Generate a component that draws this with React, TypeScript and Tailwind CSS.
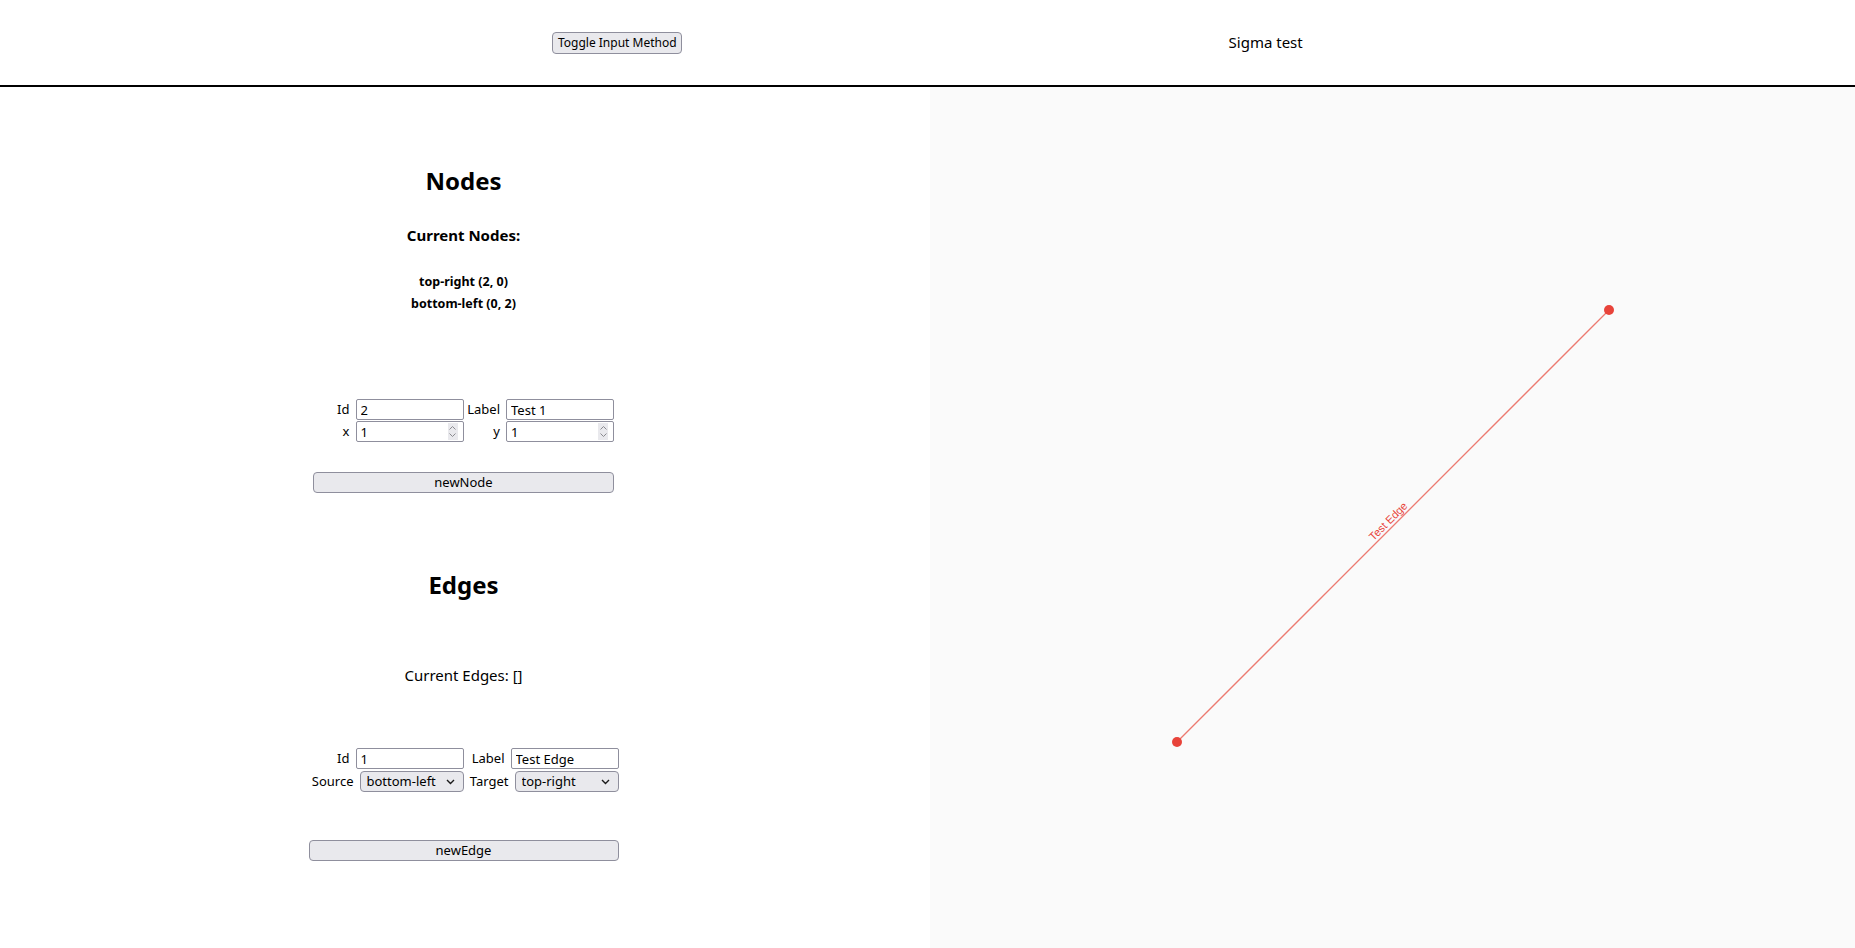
import { useState } from "react";

const font = "font-['Noto_Sans','Open_Sans',sans-serif]";

const SpinBox = () => (
  <div className="pointer-events-none absolute right-[6px] top-[2px] flex h-[17px] w-[10px] flex-col items-center justify-center gap-[3px] bg-[#e9e9ed]">
    <svg width="7" height="4" viewBox="0 0 7 4">
      <path d="M0.5 3.5 L3.5 0.5 L6.5 3.5" fill="none" stroke="#8a8a8f" strokeWidth="1" />
    </svg>
    <svg width="7" height="4" viewBox="0 0 7 4">
      <path d="M0.5 0.5 L3.5 3.5 L6.5 0.5" fill="none" stroke="#8a8a8f" strokeWidth="1" />
    </svg>
  </div>
);

const Field = ({
  label,
  value,
  numeric,
}: {
  label: string;
  value: string;
  numeric?: boolean;
}) => (
  <div className="flex h-[21px] items-center justify-end gap-[6px]">
    <span className="text-[13px] leading-[21px]">{label}</span>
    <div className="relative flex">
      <input
        type={numeric ? "number" : "text"}
        defaultValue={value}
        className="h-[21px] w-[108px] rounded-[2px] border border-[#8f8f9d] bg-white px-[4px] text-[13px] [appearance:textfield] outline-none [&::-webkit-inner-spin-button]:appearance-none [&::-webkit-outer-spin-button]:appearance-none"
      />
      {numeric && <SpinBox />}
    </div>
  </div>
);

const Picker = ({
  label,
  value,
  options,
}: {
  label: string;
  value: string;
  options: string[];
}) => (
  <div className="flex h-[21px] items-center justify-end gap-[6px]">
    <span className="text-[13px] leading-[21px]">{label}</span>
    <div className="relative flex">
      <select
        defaultValue={value}
        className="h-[21px] w-[104px] appearance-none rounded-[4px] border border-[#8f8f9d] bg-[#e9e9ed] pl-[6px] text-[13px] leading-[19px] outline-none"
      >
        {options.map((o) => (
          <option key={o}>{o}</option>
        ))}
      </select>
      <svg
        className="pointer-events-none absolute right-[9px] top-[8px]"
        width="9"
        height="6"
        viewBox="0 0 9 6"
      >
        <path d="M1 1 L4.5 4.5 L8 1" fill="none" stroke="#1b1b1b" strokeWidth="1.4" />
      </svg>
    </div>
  </div>
);

const GrayButton = ({ children, width }: { children: string; width: string }) => (
  <button
    className={`${width} h-[21px] rounded-[4px] border border-[#8f8f9d] bg-[#e9e9ed] text-[13px] leading-[19px]`}
  >
    {children}
  </button>
);

export default function App() {
  const [manual, setManual] = useState(true);
  const nodes = [
    { id: "top-right", x: 2, y: 0 },
    { id: "bottom-left", x: 0, y: 2 },
  ];

  return (
    <div className={`${font} min-h-[948px] bg-white text-black`}>
      <header className="flex h-[87px] items-center justify-evenly border-b-2 border-black">
        <button
          onClick={() => setManual(!manual)}
          className="ml-[6px] h-[22px] w-[130px] rounded-[4px] border border-[#8f8f9d] bg-[#e9e9ed] text-[12px] leading-[20px]"
        >
          Toggle Input Method
        </button>
        <span className="mr-[6px] text-[15px]">Sigma test</span>
      </header>

      <main className="grid h-[861px] grid-cols-[930px_1fr]">
        <section className="flex flex-col items-center pr-[3px]">
          <h2 className="mt-[80px] text-[24px] font-bold leading-[28px]">Nodes</h2>
          <h4 className="mt-[30px] text-[15px] font-bold leading-[20px]">Current Nodes:</h4>
          <ul className="mt-[26px] flex flex-col items-center">
            {nodes.map((n) => (
              <li key={n.id} className="text-[12.5px] font-bold leading-[22px]">
                {n.id} ({n.x}, {n.y})
              </li>
            ))}
          </ul>

          <div className="mt-[84px] grid w-[301px] grid-cols-2 gap-y-[1px]">
            <Field label="Id" value="2" />
            <Field label="Label" value="Test 1" />
            <Field label="x" value="1" numeric />
            <Field label="y" value="1" numeric />
          </div>
          <div className="mt-[30px] flex">
            <GrayButton width="w-[301px]">newNode</GrayButton>
          </div>

          <h2 className="mt-[78px] text-[24px] font-bold leading-[28px]">Edges</h2>
          <p className="mt-[66px] text-[15px] leading-[20px]">Current Edges: []</p>

          <div className="mt-[63px] grid w-[310px] grid-cols-2 gap-y-[2px]">
            <Field label="Id" value="1" />
            <Field label="Label" value="Test Edge" />
            <Picker label="Source" value="bottom-left" options={["bottom-left", "top-right"]} />
            <Picker label="Target" value="top-right" options={["top-right", "bottom-left"]} />
          </div>
          <div className="mt-[48px] flex">
            <GrayButton width="w-[310px]">newEdge</GrayButton>
          </div>
        </section>

        <section className="bg-[#fafafa]">
          <svg className="h-full w-full" viewBox="0 0 925 861">
            <line x1="247" y1="655" x2="679" y2="223" stroke="#ec7a70" strokeWidth="1.3" />
            <text
              x="463"
              y="439"
              dy="-3"
              transform="rotate(-45 463 439)"
              textAnchor="middle"
              fontSize="11"
              fill="#e8453a"
              fontFamily="Liberation Sans, Arial, sans-serif"
            >
              Test Edge
            </text>
            <circle cx="679" cy="223" r="5" fill="#e8433a" />
            <circle cx="247" cy="655" r="5" fill="#e8433a" />
          </svg>
        </section>
      </main>
    </div>
  );
}
